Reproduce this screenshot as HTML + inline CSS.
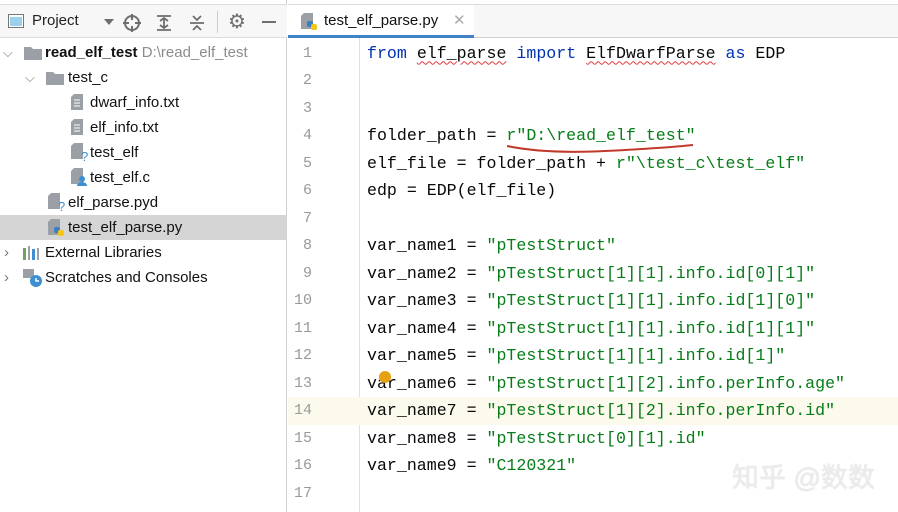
<!DOCTYPE html>
<html><head><meta charset="utf-8"><style>
*{margin:0;padding:0;box-sizing:border-box}
body{width:898px;height:512px;overflow:hidden;background:#fff;font-family:"Liberation Sans","Noto Sans CJK SC",sans-serif;position:relative}
#left{position:absolute;left:0;top:0;width:287px;height:512px;background:#fff;border-right:1px solid #d0d0d0}
#lhead{position:absolute;left:0;top:4px;width:287px;height:34px;border-top:1px solid #dcdcdc;border-bottom:1px solid #dcdcdc;background:#f7f7f7;font-size:15px;color:#222}
.row{position:absolute;left:0;width:286px;height:25px;font-size:15px;color:#111;line-height:26px;white-space:nowrap}
.ico{position:absolute;top:5px}
#editor{position:absolute;left:288px;top:0;width:610px;height:512px}
#tabs{position:absolute;left:0;top:4px;width:610px;height:34px;border-top:1px solid #dcdcdc;border-bottom:1px solid #d0d0d0;background:#f7f7f7}
#tab{position:absolute;left:0;top:0;width:186px;height:33px;background:#fff;border-bottom:3px solid #4083c9;font-size:15px;line-height:31px;color:#111}
#gutter{position:absolute;left:0;top:38px;width:72px;height:474px;background:#fff;border-right:1px solid #e0e0e0}
.ln{position:absolute;left:0;width:24px;text-align:right;font-family:"Liberation Mono",monospace;font-size:15px;color:#999;height:27.5px;line-height:27.5px}
.cl{position:absolute;left:79px;font-family:"Liberation Mono",monospace;font-size:16.6px;color:#080808;white-space:pre;height:27.5px;line-height:27.5px}
.k{color:#0033b3}.s{color:#067d17}
.sq{text-decoration:underline wavy #e0393e;text-decoration-thickness:1px;text-underline-offset:3px}
</style></head><body>
<div id="left">
<div id="lhead">
<svg style="position:absolute;left:8px;top:9px" width="16" height="14"><rect x="0.5" y="0.5" width="15" height="13" fill="#fff" stroke="#777"/><rect x="2" y="3" width="12" height="9" fill="#9cd0ef"/></svg>
<span style="position:absolute;left:32px;top:7px">Project</span>
<svg style="position:absolute;left:104px;top:14px" width="10" height="6"><path d="M0 0L10 0L5 6Z" fill="#6e6e6e"/></svg>
<svg style="position:absolute;left:122px;top:8px" width="20" height="20" fill="none" stroke="#6e6e6e" stroke-width="2"><circle cx="10" cy="10" r="7"/><path d="M10 1v6M10 13v6M1 10h6M13 10h6"/></svg>
<svg style="position:absolute;left:155px;top:9px" width="18" height="18" fill="none" stroke="#6e6e6e" stroke-width="1.8"><path d="M2 2h14M2 16h14M5 7l4-3 4 3M5 11l4 3 4-3M9 4v10"/></svg>
<svg style="position:absolute;left:188px;top:9px" width="18" height="18" fill="none" stroke="#6e6e6e" stroke-width="1.8"><path d="M2 9h14M5 2l4 4 4-4M5 16l4-4 4 4"/></svg>
<div style="position:absolute;left:217px;top:6px;width:1px;height:22px;background:#ccc"></div>
<span style="position:absolute;left:228px;top:4px;font-size:20px;color:#6e6e6e">⚙</span>
<div style="position:absolute;left:262px;top:16px;width:14px;height:2px;background:#6e6e6e"></div>
</div>

<div class="row" style="top:40px"><span style="position:absolute;left:3px;color:#777;font-size:13px">⌵</span>
<svg class="ico" style="left:24px;top:6px" width="18" height="14"><path d="M0 1h7l2 2h9v11H0Z" fill="#9aa0a6"/></svg>
<span style="position:absolute;left:45px"><b>read_elf_test</b> <span style="color:#8c8c8c">D:\read_elf_test</span></span></div>
<div class="row" style="top:65px"><span style="position:absolute;left:25px;color:#777;font-size:13px">⌵</span>
<svg class="ico" style="left:46px;top:6px" width="18" height="14"><path d="M0 1h7l2 2h9v11H0Z" fill="#9aa0a6"/></svg>
<span style="position:absolute;left:68px">test_c</span></div>
<div class="row" style="top:90px"><svg class="ico" style="left:71px;top:4px" width="12" height="16"><path d="M3 0h9v16H0V3Z" fill="#9aa0a6"/><path d="M3 6h6M3 9h6M3 12h6" stroke="#fff"/></svg><span style="position:absolute;left:90px">dwarf_info.txt</span></div>
<div class="row" style="top:115px"><svg class="ico" style="left:71px;top:4px" width="12" height="16"><path d="M3 0h9v16H0V3Z" fill="#9aa0a6"/><path d="M3 6h6M3 9h6M3 12h6" stroke="#fff"/></svg><span style="position:absolute;left:90px">elf_info.txt</span></div>
<div class="row" style="top:140px"><svg class="ico" style="left:71px;top:3px" width="18" height="18"><path d="M3 0h9v16H0V3Z" fill="#9aa0a6"/><text x="10" y="18" font-size="13" fill="#3d8fd1" font-family="Liberation Sans">?</text></svg><span style="position:absolute;left:90px">test_elf</span></div>
<div class="row" style="top:165px"><svg class="ico" style="left:71px;top:3px" width="18" height="18"><path d="M3 0h9v16H0V3Z" fill="#9aa0a6"/><circle cx="11" cy="11" r="3" fill="#3d8fd1"/><path d="M6 18a5 4 0 0 1 10 0Z" fill="#3d8fd1"/></svg><span style="position:absolute;left:90px">test_elf.c</span></div>
<div class="row" style="top:190px"><svg class="ico" style="left:48px;top:3px" width="18" height="18"><path d="M3 0h9v16H0V3Z" fill="#9aa0a6"/><text x="10" y="18" font-size="13" fill="#3d8fd1" font-family="Liberation Sans">?</text></svg><span style="position:absolute;left:68px">elf_parse.pyd</span></div>
<div class="row" style="top:215px;background:#d5d5d5"><svg class="ico" style="left:48px;top:4px" width="18" height="18"><path d="M3 0h9v16H0V3Z" fill="#9aa0a6"/><rect x="6" y="8" width="6" height="6" rx="2" fill="#3d7fc1"/><rect x="10" y="11" width="6" height="6" rx="2" fill="#f5c518"/></svg><span style="position:absolute;left:68px">test_elf_parse.py</span></div>
<div class="row" style="top:240px"><span style="position:absolute;left:4px;color:#777">›</span>
<svg class="ico" style="left:23px;top:6px" width="18" height="14"><rect x="0" y="2" width="3" height="12" fill="#6fa35f"/><rect x="5" y="0" width="2" height="14" fill="#9aa0a6"/><rect x="9" y="3" width="3" height="11" fill="#3d8fd1"/><rect x="14" y="2" width="2" height="12" fill="#9aa0a6"/></svg>
<span style="position:absolute;left:45px">External Libraries</span></div>
<div class="row" style="top:265px"><span style="position:absolute;left:4px;color:#777">›</span>
<svg class="ico" style="left:23px;top:4px" width="20" height="18"><rect x="0" y="0" width="11" height="9" fill="#9aa0a6"/><circle cx="13" cy="12" r="6" fill="#3d8fd1"/><path d="M13 9v3h3" stroke="#fff" stroke-width="1.4" fill="none"/></svg>
<span style="position:absolute;left:45px">Scratches and Consoles</span></div>
</div>

<div id="editor">
<div id="tabs"><div id="tab">
<svg style="position:absolute;left:13px;top:8px" width="18" height="18"><path d="M3 0h9v16H0V3Z" fill="#9aa0a6"/><rect x="6" y="8" width="6" height="6" rx="2" fill="#3d7fc1"/><rect x="10" y="11" width="6" height="6" rx="2" fill="#f5c518"/></svg>
<span style="position:absolute;left:36px">test_elf_parse.py</span>
<span style="position:absolute;left:165px;color:#aaa;font-size:15px">✕</span>
</div></div>
<div id="gutter"></div>
<div style="position:absolute;left:0;top:397px;width:610px;height:27.5px;background:#fcfaed"></div>

<div class="ln" style="top:39.5px">1</div><div class="ln" style="top:67px">2</div><div class="ln" style="top:94.5px">3</div><div class="ln" style="top:122px">4</div><div class="ln" style="top:149.5px">5</div><div class="ln" style="top:177px">6</div><div class="ln" style="top:204.5px">7</div><div class="ln" style="top:232px">8</div><div class="ln" style="top:259.5px">9</div><div class="ln" style="top:287px">10</div><div class="ln" style="top:314.5px">11</div><div class="ln" style="top:342px">12</div><div class="ln" style="top:369.5px">13</div><div class="ln" style="top:397px">14</div><div class="ln" style="top:424.5px">15</div><div class="ln" style="top:452px">16</div><div class="ln" style="top:479.5px">17</div>

<div class="cl" style="top:39.5px"><span class="k">from</span> <span class="sq">elf_parse</span> <span class="k">import</span> <span class="sq">ElfDwarfParse</span> <span class="k">as</span> EDP</div>
<div class="cl" style="top:122px">folder_path = <span class="s">r"D:\read_elf_test"</span></div>
<svg style="position:absolute;left:217px;top:142px" width="190" height="12"><path d="M2 4 Q40 12 100 9 T188 3" stroke="#c0392b" stroke-width="2" fill="none"/></svg>
<div class="cl" style="top:149.5px">elf_file = folder_path + <span class="s">r"\test_c\test_elf"</span></div>
<div class="cl" style="top:177px">edp = EDP(elf_file)</div>
<div class="cl" style="top:232px">var_name1 = <span class="s">"pTestStruct"</span></div>
<div class="cl" style="top:259.5px">var_name2 = <span class="s">"pTestStruct[1][1].info.id[0][1]"</span></div>
<div class="cl" style="top:287px">var_name3 = <span class="s">"pTestStruct[1][1].info.id[1][0]"</span></div>
<div class="cl" style="top:314.5px">var_name4 = <span class="s">"pTestStruct[1][1].info.id[1][1]"</span></div>
<div class="cl" style="top:342px">var_name5 = <span class="s">"pTestStruct[1][1].info.id[1]"</span></div>
<div class="cl" style="top:369.5px">var_name6 = <span class="s">"pTestStruct[1][2].info.perInfo.age"</span></div>
<div class="cl" style="top:397px">var_name7 = <span class="s">"pTestStruct[1][2].info.perInfo.id"</span></div>
<div class="cl" style="top:424.5px">var_name8 = <span class="s">"pTestStruct[0][1].id"</span></div>
<div class="cl" style="top:452px">var_name9 = <span class="s">"C120321"</span></div>
<div style="position:absolute;left:91px;top:371px;width:12px;height:12px;border-radius:50%;background:#e8a013"></div>
<div style="position:absolute;left:444px;top:456px;font-size:27px;color:#ececec;font-family:'Liberation Sans','Noto Sans CJK SC',sans-serif;text-shadow:0 0 1px #c8c8c8;white-space:nowrap">知乎 @数数</div>
</div>
</body></html>
